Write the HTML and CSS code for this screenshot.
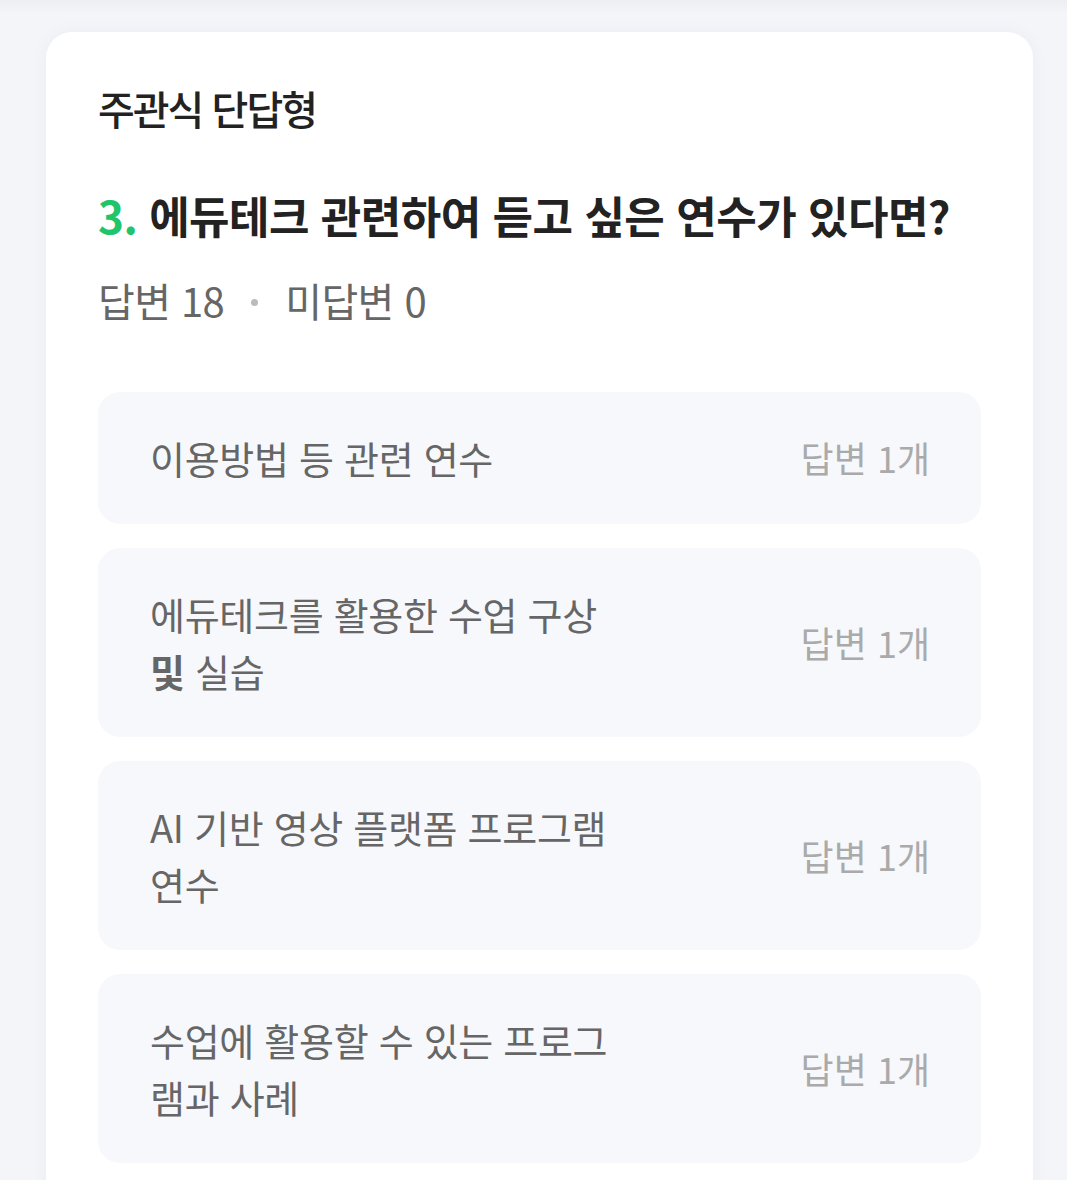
FILE: index.html
```html
<!DOCTYPE html>
<html lang="ko">
<head>
<meta charset="utf-8">
<title>주관식 단답형</title>
<link rel="stylesheet" href="styles.css">
</head>
<body>
<div class="top-shade"></div>
<main class="card">
  <div class="type">주관식 단답형</div>
  <h1 class="question"><span class="num">3.</span> 에듀테크 관련하여 듣고 싶은 연수가 있다면?</h1>
  <div class="stats">
    <span>답변 18</span>
    <span class="dot"></span>
    <span>미답변 0</span>
  </div>
  <ul class="answers">
    <li class="answer">
      <div class="answer-text">이용방법 등 관련 연수</div>
      <div class="answer-count">답변 1개</div>
    </li>
    <li class="answer">
      <div class="answer-text">에듀테크를 활용한 수업 구상 <span class="heavy">및</span> 실습</div>
      <div class="answer-count">답변 1개</div>
    </li>
    <li class="answer">
      <div class="answer-text">AI 기반 영상 플랫폼 프로그램 연수</div>
      <div class="answer-count">답변 1개</div>
    </li>
    <li class="answer">
      <div class="answer-text">수업에 활용할 수 있는 프로그램과 사례</div>
      <div class="answer-count">답변 1개</div>
    </li>
  </ul>
</main>
</body>
</html>
```

FILE: styles.css
```css
* {
  box-sizing: border-box;
}

html, body {
  margin: 0;
  padding: 0;
}

body {
  background: #f4f5f9;
  font-family: "Noto Sans CJK KR", "Noto Sans", sans-serif;
  height: 1180px;
  overflow: hidden;
}

.top-shade {
  height: 14px;
  background: linear-gradient(#eceef2, #f4f5f9);
}

.card {
  margin: 18px 0 0 46px;
  width: 987px;
  min-height: 1200px;
  background: #ffffff;
  border-radius: 26px;
  box-shadow: 0 0 18px rgba(30, 40, 80, 0.04);
  padding: 50px 52px 40px 52px;
}

.type {
  font-size: 40px;
  line-height: 53px;
  letter-spacing: -2px;
  color: #222222;
  font-weight: 500;
}

.question {
  margin: 50px 0 0 0;
  font-size: 44px;
  line-height: 60px;
  letter-spacing: -0.5px;
  font-weight: 700;
  color: #222222;
}

.num {
  color: #1fc46b;
}

.stats {
  margin-top: 30px;
  display: flex;
  align-items: center;
  gap: 27px;
  font-size: 40px;
  line-height: 50px;
  letter-spacing: -0.6px;
  color: #666666;
}

.dot {
  width: 7px;
  height: 7px;
  border-radius: 50%;
  background: #bbbbbb;
  margin-top: 4px;
}

.answers {
  list-style: none;
  margin: 67px 0 0 0;
  padding: 0;
  display: flex;
  flex-direction: column;
  gap: 24px;
}

.answer {
  display: flex;
  align-items: center;
  justify-content: space-between;
  background: #f7f8fc;
  border-radius: 22px;
  padding: 37px 51px 38px 52px;
}

.answer-text {
  width: 475px;
  font-size: 38px;
  line-height: 57px;
  letter-spacing: -0.3px;
  color: #666666;
}

.heavy {
  font-weight: 700;
}

.answer-count {
  font-size: 36px;
  line-height: 57px;
  letter-spacing: 0;
  color: #aaaaaa;
  white-space: nowrap;
}
```
